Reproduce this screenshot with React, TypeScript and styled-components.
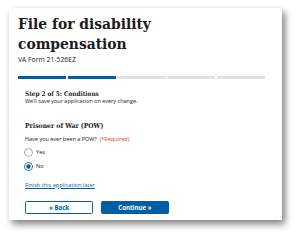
import React from "react";
import styled, { createGlobalStyle } from "styled-components";

const GlobalStyle = createGlobalStyle`
  html, body { margin: 0; padding: 0; background: #ffffff; }
  body { font-family: "Open Sans", "Liberation Sans", sans-serif; color: #1b1b1b; }
  * { box-sizing: border-box; }
`;

const Page = styled.div`
  width: 300px;
  height: 239px;
  padding: 8px 0 0 9px;
  overflow: hidden;
`;

const Card = styled.main`
  width: 273px;
  height: 212px;
  background: #ffffff;
  box-shadow: 3px 4px 7px rgba(0, 0, 0, 0.5);
  padding: 6px 17px 0 9px;
  display: flex;
  flex-direction: column;
`;

const Title = styled.h1`
  margin: 0;
  font-family: "DejaVu Serif Condensed", "DejaVu Serif", serif;
  font-weight: 700;
  font-size: 15.4px;
  line-height: 20px;
  color: #1b1b1b;
`;

const FormNumber = styled.div`
  font-size: 6.8px;
  line-height: 8px;
  margin-top: 2px;
`;

const Progress = styled.div`
  display: grid;
  grid-template-columns: repeat(5, 1fr);
  gap: 1.5px;
  margin-top: 12px;
  height: 2.5px;
`;

const Segment = styled.div<{ $done: boolean }>`
  background: ${(p) => (p.$done ? "#005ea2" : "#dfe1e2")};
`;

const Body = styled.div`
  padding-left: 7px;
  display: flex;
  flex-direction: column;
`;

const StepTitle = styled.h2`
  margin: 11.5px 0 0;
  font-family: "DejaVu Serif Condensed", "DejaVu Serif", serif;
  font-weight: 700;
  font-size: 6.4px;
  line-height: 8px;
`;

const Note = styled.p`
  margin: 0;
  font-size: 5.5px;
  line-height: 7px;
`;

const Legend = styled.h3`
  margin: 16px 0 0;
  font-family: "DejaVu Serif Condensed", "DejaVu Serif", serif;
  font-weight: 700;
  font-size: 6.8px;
  line-height: 10px;
`;

const Question = styled.div`
  margin-top: 4.8px;
  font-size: 5.5px;
  line-height: 7px;
`;

const Required = styled.span`
  color: #d83933;
  margin-left: 3px;
`;

const Options = styled.div`
  display: flex;
  flex-direction: column;
  gap: 6px;
  margin-top: 5.6px;
`;

const Option = styled.label`
  display: flex;
  align-items: center;
  gap: 4px;
  font-size: 5.6px;
  line-height: 8px;
`;

const Radio = styled.span<{ $checked: boolean }>`
  width: 7px;
  height: 7px;
  border-radius: 50%;
  flex: none;
  background: ${(p) => (p.$checked ? "#005ea2" : "#ffffff")};
  box-shadow: ${(p) =>
    p.$checked
      ? "0 0 0 0.8px #005ea2, inset 0 0 0 1.3px #ffffff"
      : "0 0 0 0.6px #71767a"};
`;

const Link = styled.a`
  margin-top: 11.3px;
  color: #005ea2;
  font-size: 5.6px;
  line-height: 7px;
  text-decoration: underline;
  align-self: flex-start;
`;

const Buttons = styled.div`
  display: flex;
  gap: 7.4px;
  margin-top: 11.9px;
`;

const Button = styled.button<{ $primary?: boolean }>`
  width: 68.3px;
  height: 13.6px;
  padding: 0;
  border-radius: 1.5px;
  font-family: "Open Sans", "Liberation Sans", sans-serif;
  font-weight: 700;
  font-size: 6.1px;
  border: 0.8px solid #005ea2;
  background: ${(p) => (p.$primary ? "#005ea2" : "#ffffff")};
  color: ${(p) => (p.$primary ? "#ffffff" : "#005ea2")};
`;

export default function App() {
  const steps = [true, true, false, false, false];
  return (
    <>
      <GlobalStyle />
      <Page>
        <Card>
          <Title>
            File for disability
            <br />
            compensation
          </Title>
          <FormNumber>VA Form 21-526EZ</FormNumber>
          <Progress>
            {steps.map((d, i) => (
              <Segment key={i} $done={d} />
            ))}
          </Progress>
          <Body>
            <StepTitle>Step 2 of 5: Conditions</StepTitle>
            <Note>We’ll save your application on every change.</Note>
            <Legend>Prisoner of War (POW)</Legend>
            <Question>
              Have you ever been a POW?<Required>(*Required)</Required>
            </Question>
            <Options>
              <Option>
                <Radio $checked={false} />
                Yes
              </Option>
              <Option>
                <Radio $checked={true} />
                No
              </Option>
            </Options>
            <Link href="#">Finish this application later</Link>
            <Buttons>
              <Button>« Back</Button>
              <Button $primary>Continue »</Button>
            </Buttons>
          </Body>
        </Card>
      </Page>
    </>
  );
}
